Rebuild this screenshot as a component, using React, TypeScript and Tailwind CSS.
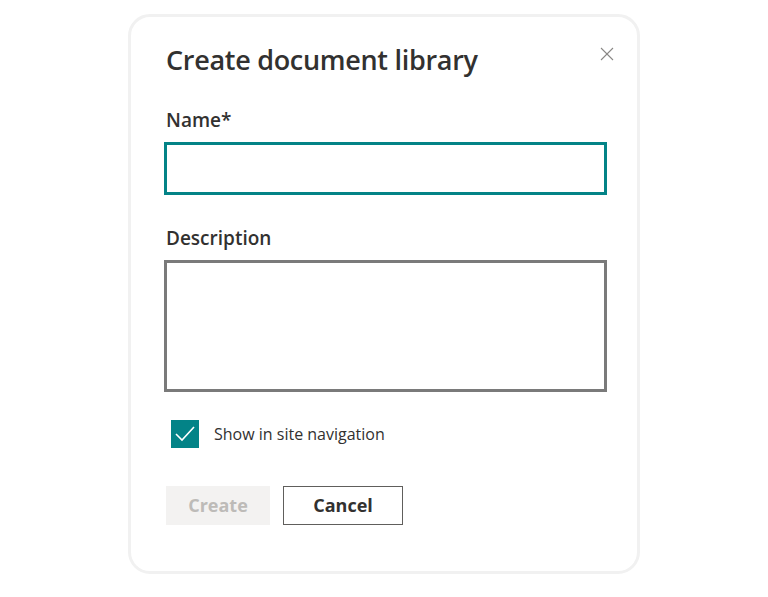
import React, { useState } from "react";

export default function App() {
  const [showInNav, setShowInNav] = useState(true);

  return (
    <div className="min-h-[597px] w-full bg-white pt-[14px]" style={{ fontFamily: "'Open Sans', 'Noto Sans', sans-serif" }}>
      {/* Dialog card */}
      <div className="mx-auto h-[560px] w-[512px] rounded-[22px] border-[3px] border-[#f1f1f1] bg-white pl-[35px] pr-[31px] pt-[23px]">
        <div className="flex items-start justify-between">
          <h1 className="text-[27px] font-semibold leading-[40px] tracking-[-0.3px] text-[#323130]">Create document library</h1>
          <button type="button" aria-label="Close" className="mt-[3px] mr-[-12px] p-1 text-[#8a8886]">
            <svg width="14" height="14" viewBox="0 0 14 14" fill="none" stroke="currentColor" strokeWidth="1.1">
              <line x1="1" y1="1" x2="13" y2="13" />
              <line x1="13" y1="1" x2="1" y2="13" />
            </svg>
          </button>
        </div>

        {/* Name field */}
        <label className="mt-[26px] block text-[19px] font-semibold leading-[28px] text-[#323130]">Name*</label>
        <input
          type="text"
          className="mt-[8px] ml-[-2px] block h-[53px] w-[443px] border-[3px] border-[#038387] px-3 outline-none"
        />

        {/* Description field */}
        <label className="mt-[29px] block text-[19px] font-semibold leading-[28px] text-[#323130]">Description</label>
        <textarea className="mt-[8px] ml-[-2px] block h-[132px] w-[443px] resize-none border-[3px] border-[#7a7a7a] px-3 outline-none" />

        {/* Checkbox */}
        <label className="mt-[28px] ml-[5px] flex cursor-pointer items-center gap-[15px]">
          <span
            onClick={() => setShowInNav(!showInNav)}
            className={`flex h-[28px] w-[28px] items-center justify-center ${showInNav ? "bg-[#038387]" : "border border-[#323130] bg-white"}`}
          >
            {showInNav && (
              <svg width="22" height="18" viewBox="0 0 22 18" fill="none" stroke="white" strokeWidth="1.6">
                <polyline points="2,9 8,15 20,2" />
              </svg>
            )}
          </span>
          <span className="text-[16px] text-[#323130]">Show in site navigation</span>
        </label>

        {/* Buttons */}
        <div className="mt-[38px] flex gap-[13px]">
          <button type="button" disabled className="h-[39px] w-[104px] bg-[#f3f2f1] text-[18px] font-bold text-[#bdbbb8]">
            Create
          </button>
          <button type="button" className="h-[39px] w-[120px] border border-[#605e5c] bg-white text-[18px] font-bold text-[#323130]">
            Cancel
          </button>
        </div>
      </div>
    </div>
  );
}
